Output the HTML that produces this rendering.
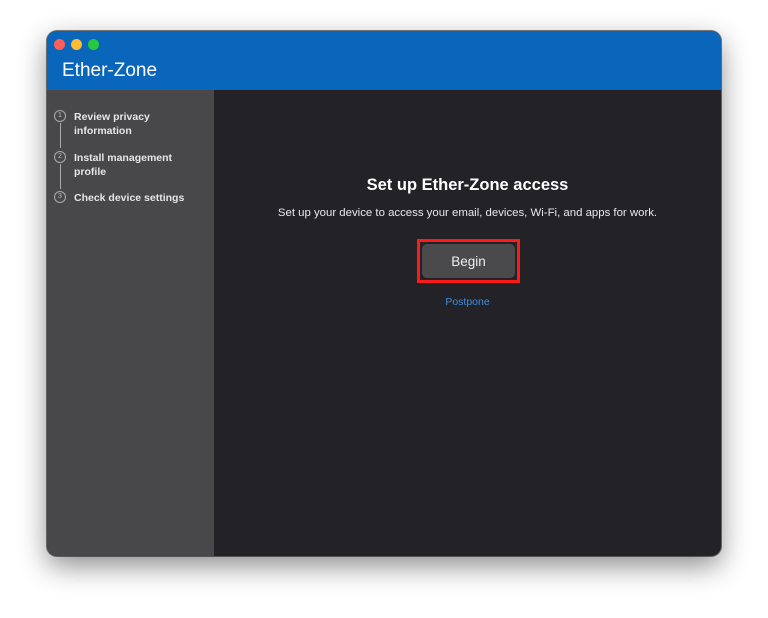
<!DOCTYPE html>
<html><head><style>
body{margin:0;width:768px;height:618px;background:#fff;font-family:"Liberation Sans",sans-serif;position:relative;overflow:hidden}
.win{position:absolute;left:47px;top:31px;width:674px;height:525px;border-radius:10px;overflow:hidden;background:#232227;box-shadow:0 10px 28px rgba(0,0,0,.45),0 0 0 1px rgba(0,0,0,.5)}
.tb{position:absolute;left:0;top:0;width:100%;height:59px;background:#0a66bb}
.dot{position:absolute;top:8px;width:11px;height:11px;border-radius:50%}
.t{position:absolute;left:15px;top:29px;color:#fff;font-size:19px}
.side{position:absolute;left:0;top:59px;width:167px;bottom:0;background:#48484a}
.st{position:absolute;left:27px;color:#e6e6e6;font-size:10.5px;font-weight:bold;line-height:14px}
.c{position:absolute;left:7px;width:10px;height:10px;border:1px solid #aaa;border-radius:50%;color:#bbb;font-size:7px;text-align:center;line-height:10px}
.ln{position:absolute;left:13px;width:1px;background:#aaa}
.main{position:absolute;left:167px;top:59px;right:0;bottom:0;text-align:center;color:#fff}
</style></head><body>
<div class="win">
<div class="tb">
<div class="dot" style="left:7px;background:#fe5f57"></div>
<div class="dot" style="left:24px;background:#febc2e"></div>
<div class="dot" style="left:41px;background:#28c840"></div>
<div class="t">Ether-Zone</div>
</div>
<div class="side">
<div class="c" style="top:20px">1</div><div class="ln" style="top:33px;height:25px"></div>
<div class="st" style="top:20px">Review privacy<br>information</div>
<div class="c" style="top:61px">2</div><div class="ln" style="top:74px;height:25px"></div>
<div class="st" style="top:61px">Install management<br>profile</div>
<div class="c" style="top:101px">3</div>
<div class="st" style="top:101px">Check device settings</div>
</div>
<div class="main">
<div style="position:absolute;left:0;right:0;top:86px;font-size:16.5px;font-weight:bold">Set up Ether-Zone access</div>
<div style="position:absolute;left:0;right:0;top:117px;font-size:11.4px;color:#e8e8e8">Set up your device to access your email, devices, Wi-Fi, and apps for work.</div>
<div style="position:absolute;left:203px;top:149px;width:103px;height:44px;border:3px solid #ff1a1a;box-sizing:border-box"></div>
<div style="position:absolute;left:208px;top:154px;width:93px;height:34px;background:#4a4a4c;border-radius:5px;font-size:13.5px;line-height:36px;color:#eee">Begin</div>
<div style="position:absolute;left:0;right:0;top:206px;font-size:10.5px;color:#3d8ee0">Postpone</div>
</div>
</div>
</body></html>
